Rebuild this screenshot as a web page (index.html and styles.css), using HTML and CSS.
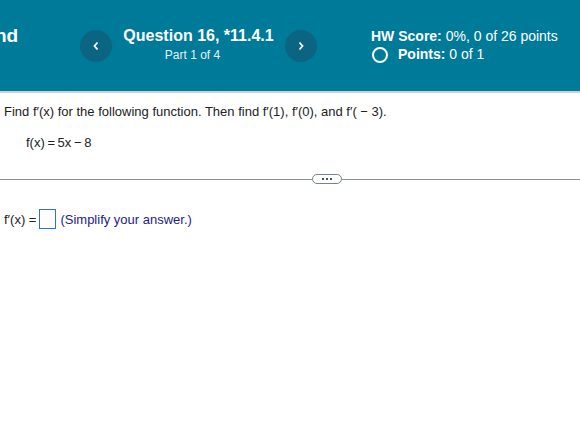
FILE: index.html
```html
<!DOCTYPE html>
<html>
<head>
<meta charset="utf-8">
<link rel="stylesheet" href="styles.css">
</head>
<body>
<header class="top">
  <div class="course">nd</div>
  <div class="nav">
    <button class="circ" aria-label="previous"><svg width="8" height="10" viewBox="0 0 8 10"><path d="M5.5 1.5 L2.5 5 L5.5 8.5" fill="none" stroke="#fff" stroke-width="1.8"/></svg></button>
    <div class="qtitle">
      <div class="qname">Question 16, *11.4.1</div>
      <div class="qpart">Part 1 of 4</div>
    </div>
    <button class="circ" aria-label="next"><svg width="8" height="10" viewBox="0 0 8 10"><path d="M2.5 1.5 L5.5 5 L2.5 8.5" fill="none" stroke="#fff" stroke-width="1.8"/></svg></button>
  </div>
  <div class="score">
    <div class="hw"><b>HW Score:</b> 0%, 0 of 26 points</div>
    <div class="pts"><span class="ring"></span><b>Points:</b>&nbsp;0 of 1</div>
  </div>
</header>
<main class="content">
  <p class="q">Find f′(x) for the following function. Then find f′(1), f′(0), and f′( − 3).</p>
  <p class="fn">f(x) = 5x − 8</p>
  <div class="divider"><span class="line left"></span><span class="pill"><i></i><i></i><i></i></span><span class="line"></span></div>
  <div class="answer"><span>f′(x) =</span><span class="box"></span><span class="hint">(Simplify your answer.)</span></div>
</main>
</body>
</html>
```
FILE: styles.css
```css
* { box-sizing: border-box; }
html, body { margin: 0; padding: 0; background: #fff; }
body { font-family: "Liberation Sans", Arial, sans-serif; color: #222; width: 580px; height: 430px; overflow: hidden; }
.top {
  height: 93px;
  background: #007a99;
  border-bottom: 2px solid #c9d3d9;
  display: flex;
  align-items: flex-start;
  color: #fff;
}
.course { font-weight: bold; font-size: 19px; margin-top: 25px; width: 80px; text-indent: -5px; overflow: hidden; }
.nav { display: flex; align-items: flex-start; }
.circ {
  width: 32px; height: 32px; border-radius: 50%; border: none; background: #0b6582;
  display: flex; align-items: center; justify-content: center; padding: 0; margin-top: 30px;
}
.qtitle { width: 173px; text-align: center; margin-top: 26px; }
.qname { font-weight: bold; font-size: 16px; line-height: 19px; }
.qpart { font-size: 12px; line-height: 15px; margin-top: 3px; padding-right: 12px; color: #e6f0f4; }
.score { margin-left: 54px; margin-top: 28px; font-size: 14px; }
.hw { line-height: 17px; }
.pts { display: flex; align-items: center; margin-top: 1px; line-height: 17px; }
.ring { width: 16px; height: 16px; border: 2.5px solid #fff; border-radius: 50%; margin-left: 1px; margin-right: 10px; }
.content { padding: 0; font-size: 13px; }
.q { margin: 10px 0 0 4px; line-height: 17px; }
.fn { margin: 14px 0 0 26px; line-height: 17px; word-spacing: -1px; }
.divider { display: flex; align-items: center; margin-top: 22px; height: 12px; }
.line { flex: 1; height: 1px; background: #8a919c; }
.line.left { flex: 0 0 312px; }
.pill {
  width: 30px; height: 10px; border: 1.5px solid #7a8290; border-radius: 6px;
  display: flex; align-items: center; justify-content: center; gap: 2px;
}
.pill i { width: 2px; height: 2px; background: #4a5260; display: block; }
.answer { display: flex; align-items: center; margin: 24px 0 0 4px; }
.box { width: 17px; height: 20px; border: 1.5px solid #2f6fd8; margin: 0 4px 0 3px; }
.hint { color: #1c1c8a; }
```
